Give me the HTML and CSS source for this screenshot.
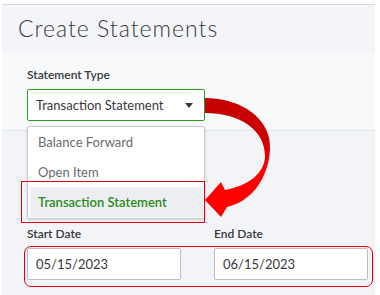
FILE: index.html
```html
<!DOCTYPE html>
<html>
<head>
  <title>Create Statements</title>
  <link rel="stylesheet" href="styles.css">
</head>
<body>
  <div class="page">
    <div class="header">
      <h1>Create Statements</h1>
    </div>

    <div class="type-section">
      <label class="field-label">Statement Type</label>
      <div class="select">
        <span>Transaction Statement</span>
        <span class="caret"></span>
      </div>
    </div>

    <div class="date-section">
      <div class="date-row">
        <div class="field">
          <label class="field-label">Start Date</label>
          <div class="date-input">05/15/2023</div>
        </div>
        <div class="field">
          <label class="field-label">End Date</label>
          <div class="date-input">06/15/2023</div>
        </div>
      </div>
    </div>

    <!-- open dropdown -->
    <ul class="menu">
      <li>Balance Forward</li>
      <li>Open Item</li>
      <li class="active">Transaction Statement</li>
    </ul>

    <!-- annotations -->
    <div class="mark mark-option"></div>
    <div class="mark mark-dates"></div>
    <svg class="arrow" width="80" height="136" viewBox="200 90 80 136">
      <defs>
        <linearGradient id="arrowFill" x1="0" y1="0" x2="0" y2="1">
          <stop offset="0" stop-color="#c40000"/>
          <stop offset="0.35" stop-color="#d00000"/>
          <stop offset="0.6" stop-color="#ff0000"/>
          <stop offset="1" stop-color="#ff0000"/>
        </linearGradient>
      </defs>
      <path fill="url(#arrowFill)" d="M205 98 C240 98 272 118 270 150 C268 180 250 202 227 207 L221 217 L205 200 L221 182 L225 190 C248 186 265 173 265 156 C265 130 240 113 205 113 Z"/>
    </svg>
  </div>
</body>
</html>
```

FILE: styles.css
```css
body {
  margin: 0;
  background: #fff;
  font-family: Lato, "Liberation Sans", sans-serif;
  color: #393a3d;
}
.page {
  position: relative;
  margin: 4px 5px 0 2px;
  height: 291px;
  background: #f3f4f7;
}
.header {
  height: 50px;
  border-top: 1px solid #d6d8dc;
  background: #f4f5f8;
  box-sizing: border-box;
  padding: 10px 0 0 16px;
}
.header h1 {
  margin: 0;
  font-size: 23px;
  line-height: 26px;
  font-weight: 300;
  letter-spacing: 1px;
  color: #393a3d;
}
.type-section {
  height: 77px;
  box-sizing: border-box;
  padding: 13px 0 0 25px;
  background: #f8f9fb;
  border-bottom: 1px solid #dfe5ec;
}
.field-label {
  display: block;
  font-size: 12px;
  line-height: 16px;
  font-weight: 600;
  margin-bottom: 6px;
}
.select {
  width: 178px;
  height: 32px;
  box-sizing: border-box;
  border: 1px solid #2ca01c;
  border-radius: 2px;
  background: #fff;
  display: flex;
  align-items: center;
  justify-content: space-between;
  padding: 0 11px 0 8px;
  font-size: 13px;
}
.caret {
  width: 0;
  height: 0;
  border-left: 4px solid transparent;
  border-right: 4px solid transparent;
  border-top: 5px solid #393a3d;
}
.date-section {
  padding: 95px 0 0 25px;
}
.date-row {
  display: flex;
  gap: 33px;
}
.date-input {
  width: 154px;
  height: 32px;
  box-sizing: border-box;
  border: 1px solid #babec5;
  border-radius: 2px;
  background: #fff;
  padding-left: 8px;
  font-size: 13px;
  line-height: 30px;
  color: #393a3d;
}
.menu {
  position: absolute;
  left: 25px;
  top: 122px;
  width: 178px;
  box-sizing: border-box;
  margin: 0;
  padding: 0 1px 1px 2px;
  list-style: none;
  background: #fff;
  border: 1px solid #c6c9ce;
  border-radius: 3px;
  box-shadow: 0 1px 3px rgba(0, 0, 0, 0.15);
}
.menu li {
  height: 30px;
  line-height: 30px;
  padding-left: 8px;
  font-size: 13px;
  color: #6b6c72;
}
.menu li.active {
  background: #eceef1;
  color: #2a8c1c;
  font-weight: 600;
}
.mark {
  position: absolute;
  box-sizing: border-box;
  border: 1px solid #e8000b;
}
.mark-option {
  left: 19px;
  top: 177px;
  width: 184px;
  height: 42px;
}
.mark-dates {
  left: 22px;
  top: 242px;
  width: 349px;
  height: 41px;
  border-radius: 7px;
}
.arrow {
  position: absolute;
  left: 198px;
  top: 86px;
}
```
